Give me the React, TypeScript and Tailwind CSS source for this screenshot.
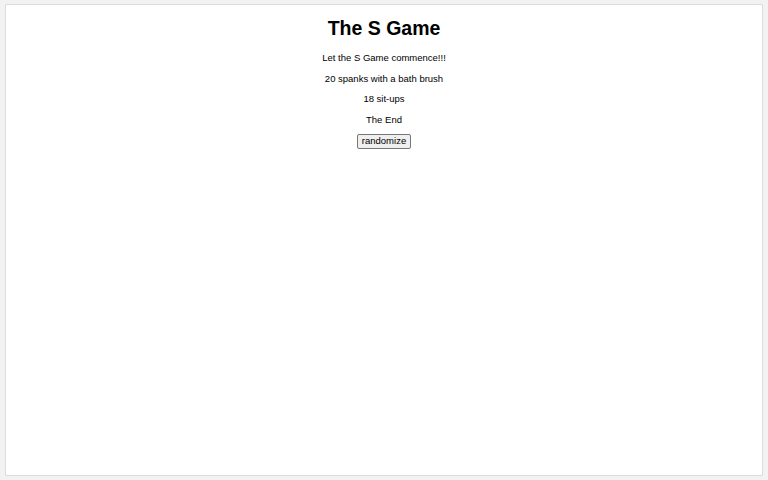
const steps = ["Let the S Game commence!!!", "20 spanks with a bath brush", "18 sit-ups", "The End"];

export default function App() {
  return (
    <div className="h-[480px] w-[768px] bg-[#f2f2f2] px-[5px] py-[4px] font-['Liberation_Sans',Arial,sans-serif] text-black">
      <div className="flex h-full flex-col items-center border border-[#dcdcdc] bg-white">
        <h1 className="mt-[12px] text-[19.5px] font-bold leading-[23px]">The S Game</h1>
        <div className="mt-[12px] flex flex-col items-center gap-[9px]">
          {steps.map((s) => (
            <p key={s} className="text-[9.5px] leading-[11.5px]">
              {s}
            </p>
          ))}
        </div>
        <button className="mt-[9px] rounded-[2px] border border-[#767676] bg-[#efefef] px-[4px] text-[9.5px] leading-[12.5px]">
          randomize
        </button>
      </div>
    </div>
  );
}
